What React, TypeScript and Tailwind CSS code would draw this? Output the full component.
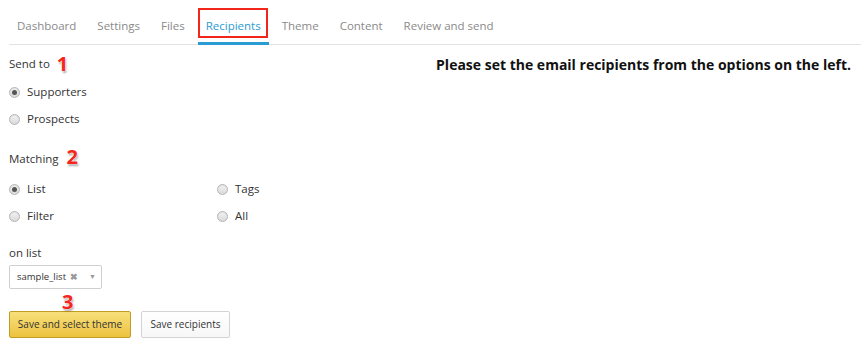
import React from "react";

const font = { fontFamily: '"Open Sans", "Liberation Sans", sans-serif' };

function Radio({ checked, label }: { checked?: boolean; label: string }) {
  return (
    <div className="flex h-[18px] items-center">
      <span className="ml-[9px] flex h-[11px] w-[11px] items-center justify-center rounded-full border border-[#b5b5b5] bg-gradient-to-b from-[#f4f4f4] to-[#d9d9d9] shadow-[inset_0_1px_1px_rgba(0,0,0,0.08)]">
        {checked && <span className="h-[5px] w-[5px] rounded-full bg-[#555]" />}
      </span>
      <span className="ml-[7px] text-[11.5px] text-[#333]">{label}</span>
    </div>
  );
}

function Num({ n }: { n: string }) {
  return (
    <span className="text-[20px] font-bold leading-none text-[#f5261b] [text-shadow:0_0_1px_#fff,0_0_2px_#fff,1px_2px_2px_rgba(0,0,0,0.35)]">
      {n}
    </span>
  );
}

export default function App() {
  const tabs = ["Dashboard", "Settings", "Files", "Recipients", "Theme", "Content", "Review and send"];
  return (
    <div className="h-[353px] w-[861px] overflow-hidden bg-white" style={font}>
      <div className="ml-[9px] flex h-[45px] items-end border-b border-[#e3e3e3]">
        {tabs.map((t) => {
          const active = t === "Recipients";
          return (
            <div
              key={t}
              className={
                "relative mr-[5px] flex h-[45px] items-start px-[8px] pt-[18px] text-[11.5px] " +
                (active ? "text-[#2d9bd2]" : "text-[#8a8a8a]")
              }
            >
              <span>{t}</span>
              {active && (
                <>
                  <span className="absolute bottom-[-1px] left-0 right-0 h-[3px] bg-[#2a9bd3]" />
                  <span className="absolute left-0 right-[1px] top-[9px] h-[30px] border-[2px] border-[#f2261a]" />
                </>
              )}
            </div>
          );
        })}
      </div>

      <div className="flex">
        <div className="w-[420px] shrink-0">
          <div className="ml-[9px] mt-[10px] flex h-[18px] items-center text-[11.5px] text-[#333]">
            <span>Send to</span>
            <span className="ml-[7px] mt-[1px]">
              <Num n="1" />
            </span>
          </div>
          <div className="mt-[10px] flex flex-col gap-[9px]">
            <Radio checked label="Supporters" />
            <Radio label="Prospects" />
          </div>
          <div className="ml-[9px] mt-[22px] flex h-[18px] items-center text-[11.5px] text-[#333]">
            <span>Matching</span>
            <span className="ml-[8px] mt-[-2px]">
              <Num n="2" />
            </span>
          </div>
          <div className="mt-[12px] grid w-[300px] grid-cols-[208px_1fr] gap-y-[9px]">
            <Radio checked label="List" />
            <Radio label="Tags" />
            <Radio label="Filter" />
            <Radio label="All" />
          </div>
          <div className="ml-[9px] mt-[19px] flex h-[18px] items-center text-[11.5px] text-[#333]">on list</div>
          <div className="relative ml-[9px] mt-[3px] flex h-[24px] w-[93px] items-center rounded-[2px] border border-[#cfcfcf] bg-white text-[9.5px] text-[#333]">
            <span className="ml-[7px] w-[53px]">sample_list</span>
            <span className="text-[9px] font-bold text-[#999]">✖</span>
            <span className="ml-[11px] text-[7px] text-[#999]">▼</span>
          </div>
          <div className="relative h-[22px]">
            <span className="absolute left-[62px] top-[2px]">
              <Num n="3" />
            </span>
          </div>
          <div className="ml-[9px] flex gap-[10px]">
            <button className="flex h-[27px] w-[122px] items-center justify-center rounded-[2px] border border-[#c29d26] bg-gradient-to-b from-[#f8e07a] to-[#ecc23d] text-[10px] text-[#333]">
              Save and select theme
            </button>
            <button className="flex h-[27px] w-[89px] items-center justify-center rounded-[2px] border border-[#d3d3d3] bg-gradient-to-b from-white to-[#f7f7f7] text-[10px] text-[#333]">
              Save recipients
            </button>
          </div>
        </div>
        <div className="flex flex-1 justify-end pr-[10px] pt-[10px]">
          <h2 className="text-[14px] font-bold leading-[20px] text-[#111]">
            Please set the email recipients from the options on the left.
          </h2>
        </div>
      </div>
    </div>
  );
}
